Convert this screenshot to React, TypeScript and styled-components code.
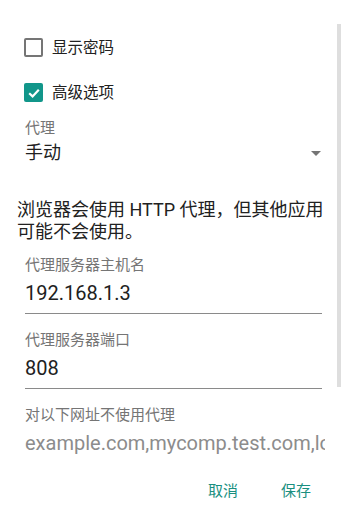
import React from 'react';
import styled, { createGlobalStyle } from 'styled-components';

const GlobalStyle = createGlobalStyle`
	html, body {
		margin: 0;
		padding: 0;
		background: #ffffff;
	}
	body {
		font-family: Roboto, 'Noto Sans CJK SC', sans-serif;
		color: #212121;
	}
`;

const teal = '#11968a';

interface CheckProps {
	label: string;
	checked?: boolean;
}

const CheckRow: React.FC<CheckProps> = ({ label, checked }: CheckProps): JSX.Element => {
	return (
		<CheckRowWrapper>
			<Box $checked={!!checked}>
				{checked && (
					<svg width="14" height="14" viewBox="0 0 14 14">
						<path d="M2.2 7.2 L5.6 10.4 L11.8 3.8" fill="none" stroke="#fff" strokeWidth="2.2" />
					</svg>
				)}
			</Box>
			<CheckLabel>{label}</CheckLabel>
		</CheckRowWrapper>
	);
};

interface FieldProps {
	label: string;
	value: string;
	hint?: boolean;
}

const Field: React.FC<FieldProps> = ({ label, value, hint }: FieldProps): JSX.Element => {
	return (
		<FieldWrapper>
			<FieldLabel>{label}</FieldLabel>
			<FieldValue $hint={!!hint}>{value}</FieldValue>
		</FieldWrapper>
	);
};

const App: React.FC = (): JSX.Element => {
	return (
		<Page>
			<GlobalStyle />
			<CheckRow label="显示密码" />
			<CheckRow label="高级选项" checked />
			<Spinner>
				<FieldLabel>代理</FieldLabel>
				<SpinnerRow>
					<SpinnerValue>手动</SpinnerValue>
					<Arrow />
				</SpinnerRow>
			</Spinner>
			<Notice>浏览器会使用 HTTP 代理，但其他应用可能不会使用。</Notice>
			<Fields>
				<Field label="代理服务器主机名" value="192.168.1.3" />
				<Field label="代理服务器端口" value="808" />
				<Field label="对以下网址不使用代理" value="example.com,mycomp.test.com,localhost" hint />
			</Fields>
			<Actions>
				<ActionButton>取消</ActionButton>
				<ActionButton>保存</ActionButton>
			</Actions>
			<Scrollbar />
		</Page>
	);
};

const Page = styled.div`
	position: relative;
	width: 345px;
	height: 528px;
	box-sizing: border-box;
	padding-top: 25px;
	overflow: hidden;
	background: #fff;
`;

const CheckRowWrapper = styled.div`
	height: 45px;
	display: flex;
	align-items: center;
	padding-left: 24px;
`;

const Box = styled.div<{ $checked: boolean }>`
	width: 19px;
	height: 19px;
	box-sizing: border-box;
	border-radius: 2px;
	border: ${(p) => (p.$checked ? 'none' : '2px solid #757575')};
	background: ${(p) => (p.$checked ? teal : 'transparent')};
	display: flex;
	align-items: center;
	justify-content: center;
`;

const CheckLabel = styled.span`
	margin-left: 9px;
	font-size: 15.5px;
	line-height: 20px;
	color: #212121;
`;

const Spinner = styled.div`
	margin-top: 3px;
	padding: 0 24px 0 25px;
	display: flex;
	flex-direction: column;
	gap: 3px;
`;

const SpinnerRow = styled.div`
	display: flex;
	align-items: center;
	justify-content: space-between;
`;

const SpinnerValue = styled.span`
	font-size: 18px;
	line-height: 24px;
	color: #212121;
`;

const Arrow = styled.span`
	width: 0;
	height: 0;
	border-left: 5px solid transparent;
	border-right: 5px solid transparent;
	border-top: 5px solid #757575;
`;

const Notice = styled.p`
	margin: 34px 0 0;
	padding: 0 17px;
	font-size: 18px;
	line-height: 22px;
	color: #212121;
`;

const Fields = styled.div`
	margin-top: 12px;
	padding: 0 23px 0 25px;
	display: flex;
	flex-direction: column;
	gap: 16px;
`;

const FieldWrapper = styled.div`
	display: flex;
	flex-direction: column;
	gap: 5px;
	&:not(:last-child) {
		padding-bottom: 7px;
		border-bottom: 1px solid #8a8a8a;
	}
`;

const FieldLabel = styled.span`
	font-size: 15px;
	line-height: 20px;
	color: #757575;
`;

const FieldValue = styled.span<{ $hint: boolean }>`
	font-size: 20px;
	line-height: 26px;
	white-space: nowrap;
	overflow: hidden;
	width: ${(p) => (p.$hint ? '300px' : 'auto')};
	color: ${(p) => (p.$hint ? '#8c8c8c' : '#212121')};
`;

const Actions = styled.div`
	margin-top: 15px;
	padding-right: 22px;
	display: flex;
	justify-content: flex-end;
	gap: 19px;
`;

const ActionButton = styled.button`
	border: none;
	background: transparent;
	height: 36px;
	padding: 0 12px;
	font-family: Roboto, 'Noto Sans CJK SC', sans-serif;
	font-size: 15px;
	color: #1a8f80;
`;

const Scrollbar = styled.div`
	position: absolute;
	top: 24px;
	right: 4px;
	width: 4px;
	height: 363px;
	background: #dedede;
`;

export default App;
